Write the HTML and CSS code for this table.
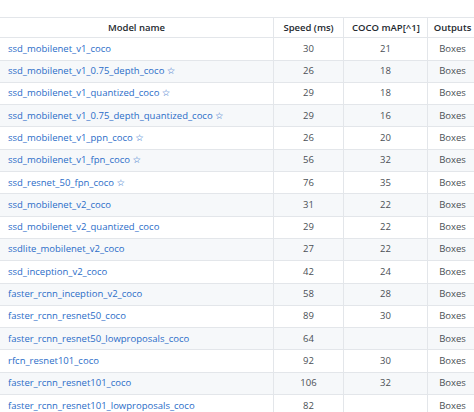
FILE: index.html
```html
<!DOCTYPE html>
<html>
<head>
<meta charset="utf-8">
<link rel="stylesheet" href="styles.css">
</head>
<body>
<div class="wrap">
<table class="models">
  <colgroup>
    <col class="c-name"><col class="c-speed"><col class="c-map"><col class="c-out">
  </colgroup>
  <thead>
    <tr><th>Model name</th><th>Speed (ms)</th><th>COCO mAP[^1]</th><th>Outputs</th></tr>
  </thead>
  <tbody>
    <tr><td><a href="#">ssd_mobilenet_v1_coco</a></td><td>30</td><td>21</td><td>Boxes</td></tr>
    <tr><td><a href="#">ssd_mobilenet_v1_0.75_depth_coco ☆</a></td><td>26</td><td>18</td><td>Boxes</td></tr>
    <tr><td><a href="#">ssd_mobilenet_v1_quantized_coco ☆</a></td><td>29</td><td>18</td><td>Boxes</td></tr>
    <tr><td><a href="#">ssd_mobilenet_v1_0.75_depth_quantized_coco ☆</a></td><td>29</td><td>16</td><td>Boxes</td></tr>
    <tr><td><a href="#">ssd_mobilenet_v1_ppn_coco ☆</a></td><td>26</td><td>20</td><td>Boxes</td></tr>
    <tr><td><a href="#">ssd_mobilenet_v1_fpn_coco ☆</a></td><td>56</td><td>32</td><td>Boxes</td></tr>
    <tr><td><a href="#">ssd_resnet_50_fpn_coco ☆</a></td><td>76</td><td>35</td><td>Boxes</td></tr>
    <tr><td><a href="#">ssd_mobilenet_v2_coco</a></td><td>31</td><td>22</td><td>Boxes</td></tr>
    <tr><td><a href="#">ssd_mobilenet_v2_quantized_coco</a></td><td>29</td><td>22</td><td>Boxes</td></tr>
    <tr><td><a href="#">ssdlite_mobilenet_v2_coco</a></td><td>27</td><td>22</td><td>Boxes</td></tr>
    <tr><td><a href="#">ssd_inception_v2_coco</a></td><td>42</td><td>24</td><td>Boxes</td></tr>
    <tr><td><a href="#">faster_rcnn_inception_v2_coco</a></td><td>58</td><td>28</td><td>Boxes</td></tr>
    <tr><td><a href="#">faster_rcnn_resnet50_coco</a></td><td>89</td><td>30</td><td>Boxes</td></tr>
    <tr><td><a href="#">faster_rcnn_resnet50_lowproposals_coco</a></td><td>64</td><td></td><td>Boxes</td></tr>
    <tr><td><a href="#">rfcn_resnet101_coco</a></td><td>92</td><td>30</td><td>Boxes</td></tr>
    <tr><td><a href="#">faster_rcnn_resnet101_coco</a></td><td>106</td><td>32</td><td>Boxes</td></tr>
    <tr><td><a href="#">faster_rcnn_resnet101_lowproposals_coco</a></td><td>82</td><td></td><td>Boxes</td></tr>
  </tbody>
</table>
</div>
</body>
</html>
```
FILE: styles.css
```css
html, body {
  margin: 0;
  padding: 0;
  background: #ffffff;
  overflow: hidden;
}
body {
  width: 474px;
  height: 412px;
  font-family: "Open Sans", "Noto Sans", "DejaVu Sans", sans-serif;
  font-size: 9.5px;
  color: #24292f;
}
.wrap {
  padding-top: 17px;
  width: 474px;
  overflow: hidden;
}
.models {
  border-collapse: collapse;
  table-layout: fixed;
  width: 478px;
  margin-left: -1px;
}
.c-name { width: 274px; }
.c-speed { width: 70px; }
.c-map { width: 84px; }
.c-out { width: 50px; }
.models th,
.models td {
  border: 1px solid #e3e6ea;
  padding: 3.5px 8px;
  line-height: 14.3px;
  text-align: center;
  white-space: nowrap;
}
.models th {
  font-size: 9.5px;
  font-weight: 600;
  padding-top: 2px;
  padding-bottom: 2px;
  line-height: 15.3px;
}
.models th:last-child,
.models td:last-child {
  padding-left: 0;
  padding-right: 0;
}
.models td:first-child {
  text-align: left;
}
.models tbody tr:nth-child(even) {
  background: #f6f8fa;
}
.models a {
  color: #2a6cc8;
  text-decoration: none;
}
.models td {
  color: #4a4f55;
}
```
